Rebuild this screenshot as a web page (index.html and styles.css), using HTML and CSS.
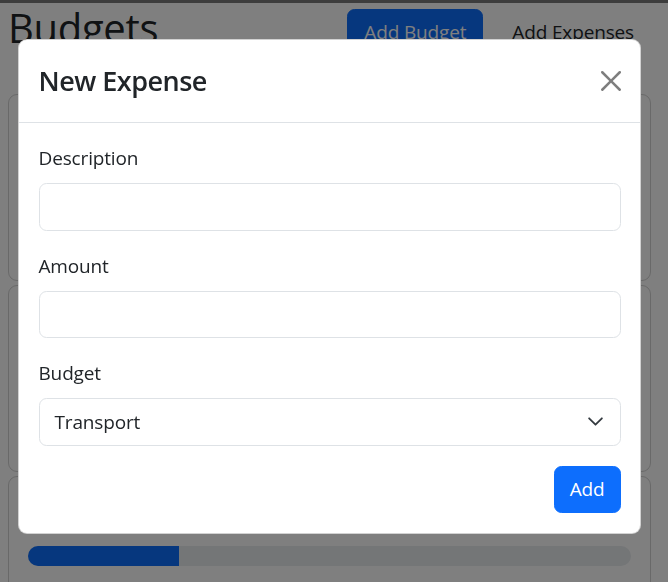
FILE: index.html
```html
<!DOCTYPE html>
<html lang="en">
<head>
<meta charset="utf-8">
<title>Budgets</title>
<link rel="stylesheet" href="styles.css">
</head>
<body>
<div class="topbar"></div>
<div class="page">
  <div class="page-head">
    <h1 class="page-title">Budgets</h1>
    <div class="actions">
      <button class="btn btn-primary">Add Budget</button>
      <button class="btn btn-plain">Add Expenses</button>
    </div>
  </div>
  <div class="cards">
    <div class="card"></div>
    <div class="card"></div>
    <div class="card">
      <div class="card-head"></div>
      <div class="progress"><div class="progress-fill" style="width:25%"></div></div>
    </div>
  </div>
</div>

<div class="backdrop"></div>

<div class="modal">
  <div class="modal-header">
    <h5 class="modal-title">New Expense</h5>
    <button class="btn-close" aria-label="Close">
      <svg viewBox="0 0 16 16" width="20" height="20"><path d="M.293.293a1 1 0 0 1 1.414 0L8 6.586 14.293.293a1 1 0 1 1 1.414 1.414L9.414 8l6.293 6.293a1 1 0 0 1-1.414 1.414L8 9.414l-6.293 6.293a1 1 0 0 1-1.414-1.414L6.586 8 .293 1.707a1 1 0 0 1 0-1.414z"/></svg>
    </button>
  </div>
  <div class="modal-body">
    <div class="field">
      <label class="label">Description</label>
      <input class="input" type="text">
    </div>
    <div class="field">
      <label class="label">Amount</label>
      <input class="input" type="text">
    </div>
    <div class="field">
      <label class="label">Budget</label>
      <div class="select">
        <span>Transport</span>
        <svg viewBox="0 0 16 16" width="17" height="17"><path fill="none" stroke="#343a40" stroke-linecap="round" stroke-linejoin="round" stroke-width="1.7" d="m2 5 6 6 6-6"/></svg>
      </div>
    </div>
    <div class="modal-footer">
      <button class="btn btn-primary btn-add">Add</button>
    </div>
  </div>
</div>
</body>
</html>
```

FILE: styles.css
```css
* { box-sizing: border-box; }

html, body {
  margin: 0;
  padding: 0;
  height: 100%;
  overflow: hidden;
  background: #ffffff;
  font-family: "Open Sans", "Noto Sans", sans-serif;
  color: #212529;
}

.topbar {
  height: 3px;
  background: #7a7a7a;
}

.page {
  padding: 0 17px 0 8px;
}

.page-head {
  display: flex;
  justify-content: space-between;
  align-items: flex-start;
}

.page-title {
  margin: 0;
  font-size: 40px;
  font-weight: 500;
  line-height: 50px;
  letter-spacing: -0.3px;
}

.actions {
  display: flex;
  gap: 12px;
  margin-top: 6px;
}

.btn {
  height: 47.5px;
  padding: 0 16px;
  border: 1px solid transparent;
  border-radius: 7.5px;
  font-family: inherit;
  font-size: 19px;
  letter-spacing: -0.15px;
  line-height: 1;
  cursor: pointer;
}

.btn-primary {
  background: #0d6efd;
  border-color: #0d6efd;
  color: #ffffff;
}

.btn-plain {
  background: transparent;
  color: #212529;
}

.btn-add {
  padding: 0 15px;
}

.cards {
  margin-top: 37px;
  display: flex;
  flex-direction: column;
  gap: 4px;
}

.card {
  height: 187px;
  flex: none;
  border: 1px solid rgba(0, 0, 0, 0.175);
  border-radius: 9px;
  padding: 20px 19px;
}

.card-head {
  height: 49px;
}

.progress {
  height: 20px;
  background: #e9ecef;
  border-radius: 10px;
  overflow: hidden;
}

.progress-fill {
  height: 100%;
  background: #0d6efd;
}

.backdrop {
  position: fixed;
  inset: 0;
  background: rgba(0, 0, 0, 0.5);
}

.modal {
  position: fixed;
  top: 39px;
  left: 18px;
  width: 623px;
  background: #ffffff;
  border: 1px solid rgba(0, 0, 0, 0.175);
  border-radius: 9px;
  overflow: hidden;
}

.modal-header {
  display: flex;
  justify-content: space-between;
  align-items: center;
  padding: 20px 19.5px;
  border-bottom: 1px solid #dee2e6;
}

.modal-title {
  margin: 0;
  font-size: 27px;
  font-weight: 600;
  line-height: 42px;
  letter-spacing: -0.5px;
  color: #212529;
}

.btn-close {
  width: 20px;
  height: 20px;
  padding: 0;
  border: 0;
  background: transparent;
  opacity: 0.5;
  display: flex;
  cursor: pointer;
}

.btn-close svg { fill: #000000; }

.modal-body {
  padding: 20px 19.5px;
}

.field {
  margin-bottom: 20px;
}

.label {
  display: block;
  font-size: 19px;
  letter-spacing: -0.15px;
  line-height: 30px;
  margin-bottom: 10px;
}

.input,
.select {
  display: block;
  width: 100%;
  height: 47.5px;
  padding: 0 15px;
  border: 1px solid #dee2e6;
  border-radius: 7.5px;
  background: #ffffff;
  font-family: inherit;
  font-size: 19px;
  color: #212529;
}

.select {
  display: flex;
  align-items: center;
  justify-content: space-between;
  padding-right: 16px;
  letter-spacing: -0.15px;
}

.select svg { flex: none; }

.modal-footer {
  display: flex;
  justify-content: flex-end;
}
```
